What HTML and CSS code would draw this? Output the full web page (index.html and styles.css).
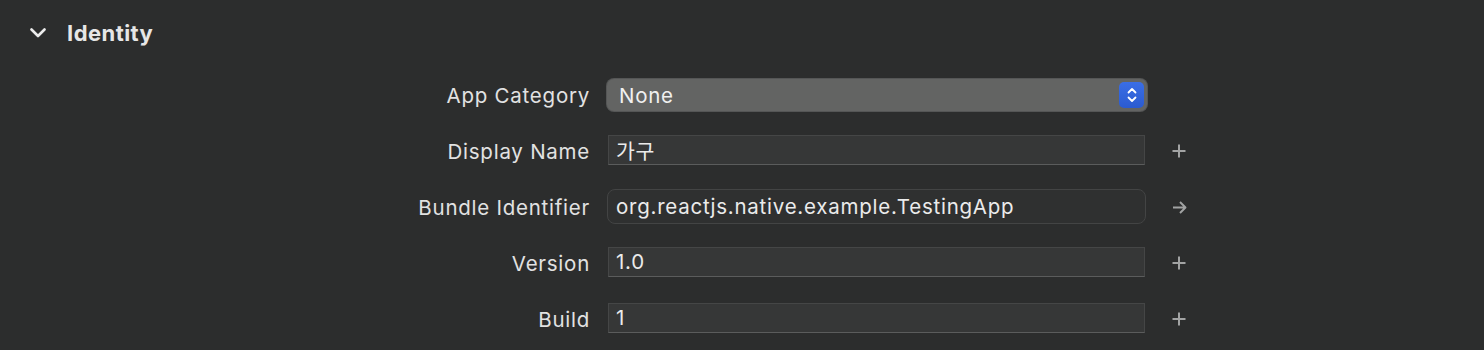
FILE: index.html
```html
<!DOCTYPE html>
<html lang="ko">
<head>
  <meta charset="UTF-8" />
  <title>Identity</title>
  <link rel="stylesheet" href="styles.css">
</head>
<body>
  <div class="section-head">
    <svg class="chevron" width="16" height="10" viewBox="0 0 16 10">
      <path d="M1.5 1.5 L8 8 L14.5 1.5" fill="none" stroke="#ececec" stroke-width="2.6" stroke-linecap="round" stroke-linejoin="round"/>
    </svg>
    <span class="section-title">Identity</span>
  </div>

  <div class="form">
    <label class="label">App Category</label>
    <div class="popup">
      <span>None</span>
      <span class="stepper">
        <svg width="12" height="18" viewBox="0 0 12 18">
          <path d="M2.5 6.5 L6 3 L9.5 6.5 M2.5 11.5 L6 15 L9.5 11.5" fill="none" stroke="#ffffff" stroke-width="1.8" stroke-linecap="round" stroke-linejoin="round"/>
        </svg>
      </span>
    </div>
    <span></span>

    <label class="label">Display Name</label>
    <div class="field">가구</div>
    <span class="action">
      <svg width="14" height="14" viewBox="0 0 14 14"><path d="M7 0.5 V13.5 M0.5 7 H13.5" stroke="#a2a3a3" stroke-width="2"/></svg>
    </span>

    <label class="label">Bundle Identifier</label>
    <div class="field rounded">org.reactjs.native.example.TestingApp</div>
    <span class="action">
      <svg width="15" height="13" viewBox="0 0 15 13"><path d="M1 6.5 H13.5 M8 1 L13.5 6.5 L8 12" fill="none" stroke="#a2a3a3" stroke-width="1.9" stroke-linejoin="round"/></svg>
    </span>

    <label class="label">Version</label>
    <div class="field">1.0</div>
    <span class="action">
      <svg width="14" height="14" viewBox="0 0 14 14"><path d="M7 0.5 V13.5 M0.5 7 H13.5" stroke="#a2a3a3" stroke-width="2"/></svg>
    </span>

    <label class="label">Build</label>
    <div class="field">1</div>
    <span class="action">
      <svg width="14" height="14" viewBox="0 0 14 14"><path d="M7 0.5 V13.5 M0.5 7 H13.5" stroke="#a2a3a3" stroke-width="2"/></svg>
    </span>
  </div>
</body>
</html>
```

FILE: styles.css
```css
body {
  margin: 0;
  background: #2c2d2d;
  color: #e2e2e2;
  font-family: Inter, "Noto Sans CJK KR", sans-serif;
  height: 350px;
  overflow: hidden;
}

.section-head {
  display: flex;
  align-items: center;
  height: 66px;
  padding-left: 30px;
}

.chevron {
  margin-right: 21px;
}

.section-title {
  font-size: 22px;
  font-weight: 700;
  letter-spacing: 0.45px;
  color: #e6e6e6;
}

.form {
  display: grid;
  grid-template-columns: 590px 540px 30px;
  grid-auto-rows: 56px;
  column-gap: 17px;
  align-items: center;
  margin-top: 1px;
}

.label {
  text-align: right;
  font-size: 20.5px;
  letter-spacing: 0.75px;
  color: #e2e2e2;
}

.popup {
  display: flex;
  align-items: center;
  justify-content: space-between;
  height: 32px;
  box-sizing: border-box;
  padding: 0 3px 0 12px;
  background: #636463;
  border-radius: 7px;
  box-shadow: 0 0 0 1px #555656;
  font-size: 20.5px;
  letter-spacing: 0.75px;
  color: #f0f0f0;
}

.stepper {
  display: flex;
  align-items: center;
  justify-content: center;
  width: 25px;
  height: 26px;
  border-radius: 5px;
  background: linear-gradient(#3a6ee6, #2b5bd0);
}

.field {
  height: 30px;
  box-sizing: border-box;
  margin: 0 2px 3px 1px;
  padding-left: 7px;
  display: flex;
  align-items: center;
  background: #363737;
  border: 1px solid #454646;
  border-bottom-color: #5b5c5c;
  font-size: 20.5px;
  letter-spacing: 0.75px;
  color: #ebebeb;
}

.field.rounded {
  height: 35px;
  margin: 0 1px 1px 0;
  padding-left: 8px;
  border-radius: 8px;
  background: #2f3030;
  border-color: #434444;
}

.action {
  display: flex;
  justify-content: center;
  align-items: center;
}
```
